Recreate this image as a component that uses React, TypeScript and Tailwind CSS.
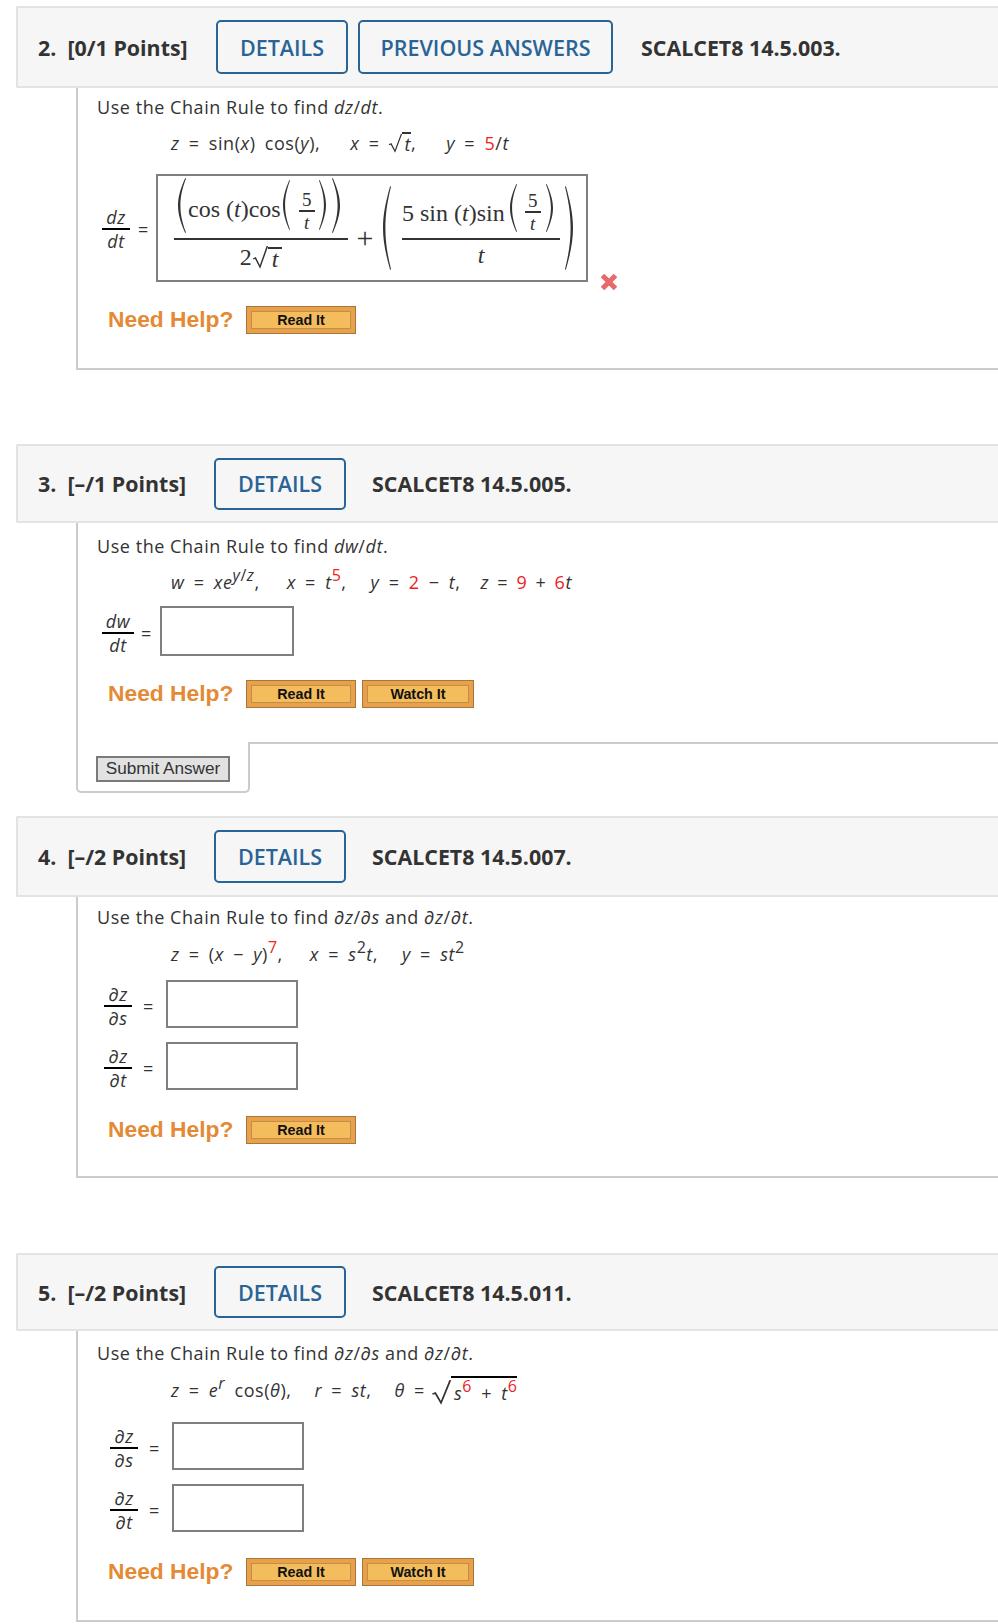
import { ReactNode } from 'react'

const Red = ({ children }: { children: ReactNode }) => <span className="text-[#f0211d] not-italic">{children}</span>
const I = ({ children }: { children: ReactNode }) => <i className="italic">{children}</i>
const Sup = ({ children }: { children: ReactNode }) => <sup className="text-[16px] leading-none align-baseline top-[-8px]">{children}</sup>

function Paren({ h, w = 8, right = false, className = '' }: { h: number, w?: number, right?: boolean, className?: string }) {
  return (
    <svg width={w} height={h} viewBox="0 0 10 100" preserveAspectRatio="none" className={`shrink-0 ${right ? '-scale-x-100' : ''} ${className}`}>
      <path d="M9 0 C3 20 0 35 0 50 C0 65 3 80 9 100 L10 99 C5 80 3 65 3 50 C3 35 5 20 10 1 Z" fill="#333" />
    </svg>
  )
}

function Radical({ w, h }: { w: number, h: number }) {
  return (
    <svg width={w} height={h} viewBox="0 0 14 24" preserveAspectRatio="none" className="shrink-0">
      <path d="M1 14 L3 13 L7 22 L13.5 1" fill="none" stroke="#333" strokeWidth="1.3" />
    </svg>
  )
}

function Frac({ top, bottom, className = '' }: { top: ReactNode, bottom: ReactNode, className?: string }) {
  return (
    <span className={`inline-flex flex-col items-center italic leading-[22px] ${className}`}>
      <span>{top}</span>
      <span className="w-full h-[2px] bg-black" />
      <span>{bottom}</span>
    </span>
  )
}

function TinyFrac({ w }: { w: number }) {
  return (
    <span className="flex flex-col items-center font-['Liberation_Serif',serif] text-[19px] leading-[21px]" style={{ width: w }}>
      <span>5</span>
      <span className="w-full h-[2px] bg-[#333]" />
      <i>t</i>
    </span>
  )
}

function Help({ watch = false }: { watch?: boolean }) {
  return (
    <div className="flex items-center h-[28px] ml-[11px] tracking-normal font-['Liberation_Sans',sans-serif]">
      <span className="w-[124px] mb-[2px] text-[22.8px] font-bold text-[#e48a34] whitespace-nowrap">Need Help?</span>
      <HelpButton label="Read It" className="ml-[14px] w-[110px]" />
      {watch && <HelpButton label="Watch It" className="ml-[6px] w-[112px]" />}
    </div>
  )
}

function HelpButton({ label, className }: { label: string, className: string }) {
  return (
    <div className={`h-[28px] border border-[#a87636] bg-[#e8a04c] p-[4px] ${className}`}>
      <div className="h-full border border-[#c48f42] bg-[#f3bd5e] flex items-center justify-center text-[14.3px] font-bold text-[#111] leading-none">{label}</div>
    </div>
  )
}

function Header({ label, code, height, btn, gap, drop = 'pt-[2px]', prev = false }: { label: string, code: string, height: string, btn: string, gap: string, drop?: string, prev?: boolean }) {
  const button = `flex items-center justify-center border-2 border-[#2a6496] rounded-[5px] font-semibold text-[21.5px] text-[#2a6496] ${drop} ${btn}`
  return (
    <div className={`flex items-center border-2 border-r-0 border-[#e3e3e3] bg-[#f6f6f6] rounded-l-[2px] ml-[16px] pl-[20px] font-bold text-[21.4px] text-[#333] tracking-normal ${height}`}>
      <span className={`whitespace-pre ${drop} ${gap}`}>{label}</span>
      <span className={`${button} w-[132px]`}>DETAILS</span>
      {prev && <span className={`${button} w-[255px] ml-[10px]`}>PREVIOUS ANSWERS</span>}
      <span className={`${drop} ${prev ? 'ml-[28px]' : 'ml-[26px]'}`}>{code}</span>
    </div>
  )
}

function Answer({ top, bottom, mt, fracMl }: { top: string, bottom: string, mt: string, fracMl: string }) {
  return (
    <div className={`flex items-center ${mt} ${fracMl}`}>
      <div className="flex items-center mt-[5px]">
        <Frac top={top} bottom={bottom} className="w-[28px]" />
        <span className="ml-[11px] w-[12px]">=</span>
      </div>
      <div className="w-[132px] h-[48px] border-2 border-[#7f7f7f] bg-white ml-[11px]" />
    </div>
  )
}

export default function App() {
  return (
    <div className="w-[998px] h-[1624px] overflow-hidden bg-white pt-[6px] font-['Open_Sans',sans-serif] text-[18px] tracking-[0.55px] text-[#333]">
      {/* question 2 */}
      <Header label="2.  [0/1 Points]" code="SCALCET8 14.5.003." height="h-[82px]" btn="h-[54px]" gap="w-[178px]" drop="pt-[3px]" prev />
      <div className="ml-[76px] h-[282px] border-l-2 border-b-2 border-[#cccccc] pl-[19px] pt-[6px]">
        <p className="leading-[26px]">Use the Chain Rule to find <I>dz</I>/<I>dt</I>.</p>
        <div className="flex items-center ml-[74px] mt-[10px] h-[26px] whitespace-pre [word-spacing:4px]">
          <span><I>z</I> = sin(<I>x</I>) cos(<I>y</I>),</span>
          <span className="ml-[30px]"><I>x</I> =</span>
          <span className="ml-[8px]"><Radical w={14} h={20} /></span>
          <span className="border-t-2 border-[#333] leading-[20px] pl-[3px]"><I>t</I></span>
          <span>,</span>
          <span className="ml-[30px]"><I>y</I> = <Red>5</Red>/<I>t</I></span>
        </div>
        <div className="flex items-end mt-[18px] ml-[5px]">
          <div className="flex items-center self-center mt-[2px]">
            <Frac top="dz" bottom="dt" className="w-[28px]" />
            <span className="ml-[8px] w-[11px]">=</span>
          </div>
          <div className="ml-[7px] w-[432px] h-[108px] border-2 border-[#7f7f7f] flex items-center pl-[16px] font-['Liberation_Serif',serif] text-[24px] leading-none tracking-normal">
            <div className="w-[174px] flex flex-col items-center h-[100px]">
              <div className="flex items-center h-[60px] w-full pl-[4px]">
                <Paren h={55} className="mb-[6px]" />
                <span className="ml-[2px] mt-[2px] whitespace-pre">cos (<i>t</i>)cos</span>
                <Paren h={50} w={7} className="ml-[2px] mb-[6px]" />
                <span className="ml-[9px] mt-[6px]"><TinyFrac w={16} /></span>
                <Paren h={50} w={7} right className="ml-[4px] mb-[6px]" />
                <Paren h={55} right className="ml-[6px] mb-[6px]" />
              </div>
              <span className="w-full h-[2px] bg-[#333]" />
              <div className="flex items-center h-[34px]">
                <span>2</span>
                <Radical w={16} h={24} />
                <i className="border-t-2 border-[#333] px-[4px] leading-[20px] mt-[2px]">t</i>
              </div>
            </div>
            <span className="ml-[8px] mt-[20px] w-[18px] text-center text-[30px]">+</span>
            <Paren h={84} className="ml-[9px]" />
            <div className="ml-[11px] w-[158px] flex flex-col items-center h-[100px]">
              <div className="flex items-center h-[60px] w-full">
                <span className="mt-[10px] whitespace-pre">5 sin (<i>t</i>)sin</span>
                <Paren h={48} w={7} className="ml-[5px]" />
                <span className="ml-[8px] mt-[8px]"><TinyFrac w={16} /></span>
                <Paren h={48} w={7} right className="ml-[5px]" />
              </div>
              <span className="w-full h-[2px] bg-[#333]" />
              <i className="h-[30px] flex items-center">t</i>
            </div>
            <Paren h={84} right className="ml-[5px]" />
          </div>
          <svg width="18" height="18" viewBox="0 0 18 18" className="ml-[12px] mb-[-9px]">
            <path d="M2.5 2.5 L15.5 15.5 M15.5 2.5 L2.5 15.5" stroke="#e8686b" strokeWidth="5" />
          </svg>
        </div>
        <div className="mt-[24px]"><Help /></div>
      </div>

      {/* question 3 */}
      <div className="mt-[74px]">
        <Header label="3.  [–/1 Points]" code="SCALCET8 14.5.005." height="h-[79px]" btn="h-[52px]" gap="w-[176px]" />
      </div>
      <div className="ml-[76px] h-[219px] border-l-2 border-[#cccccc] pl-[19px] pt-[10px]">
        <p className="leading-[26px]">Use the Chain Rule to find <I>dw</I>/<I>dt</I>.</p>
        <div className="ml-[74px] mt-[10px] h-[26px] leading-[26px] whitespace-pre [word-spacing:4px]">
          <I>w</I> = <I>xe</I><Sup><I>y</I>/<I>z</I></Sup>,<span className="ml-[27px]"><I>x</I> = <I>t</I><Sup><Red>5</Red></Sup>,</span>
          <span className="ml-[24px]"><I>y</I> = <Red>2</Red> − <I>t</I>,</span>
          <span className="ml-[20px] [word-spacing:3px]"><I>z</I> = <Red>9</Red> + <Red>6</Red><I>t</I></span>
        </div>
        <div className="flex items-center mt-[11px] ml-[5px]">
          <div className="flex items-center mt-[4px]">
            <Frac top="dw" bottom="dt" className="w-[32px]" />
            <span className="ml-[7px] w-[12px]">=</span>
          </div>
          <div className="ml-[7px] w-[134px] h-[50px] border-2 border-[#7f7f7f]" />
        </div>
        <div className="mt-[24px]"><Help watch /></div>
      </div>
      <div className="ml-[76px] flex h-[51px]">
        <div className="w-[174px] border-l-2 border-r-2 border-b-2 border-[#cccccc] rounded-b-[5px] pl-[18px] pt-[14px]">
          <div className="w-[134px] h-[26px] border-2 border-[#7a7a7a] bg-[#e2e2e2] flex items-center justify-center font-['Liberation_Sans',sans-serif] text-[17.2px] tracking-normal leading-none">Submit Answer</div>
        </div>
        <div className="flex-1 border-t-2 border-[#cccccc]" />
      </div>

      {/* question 4 */}
      <div className="mt-[23px]">
        <Header label="4.  [–/2 Points]" code="SCALCET8 14.5.007." height="h-[81px]" btn="h-[53px]" gap="w-[176px]" />
      </div>
      <div className="ml-[76px] h-[281px] border-l-2 border-b-2 border-[#cccccc] pl-[19px] pt-[7px]">
        <p className="leading-[26px]">Use the Chain Rule to find ∂<I>z</I>/∂<I>s</I> and ∂<I>z</I>/∂<I>t</I>.</p>
        <div className="ml-[74px] mt-[11px] h-[26px] leading-[26px] whitespace-pre [word-spacing:4px]">
          <I>z</I> = (<I>x</I> − <I>y</I>)<Sup><Red>7</Red></Sup>,<span className="ml-[27px]"><I>x</I> = <I>s</I><Sup>2</Sup><I>t</I>,</span>
          <span className="ml-[24px]"><I>y</I> = <I>st</I><Sup>2</Sup></span>
        </div>
        <Answer top="∂z" bottom="∂s" mt="mt-[11px]" fracMl="ml-[7px]" />
        <Answer top="∂z" bottom="∂t" mt="mt-[11px]" fracMl="ml-[7px]" />
        <div className="mt-[25px]"><Help /></div>
      </div>

      {/* question 5 */}
      <div className="mt-[75px]">
        <Header label="5.  [–/2 Points]" code="SCALCET8 14.5.011." height="h-[78px]" btn="h-[52px]" gap="w-[176px]" />
      </div>
      <div className="ml-[76px] h-[291px] border-l-2 border-b-2 border-[#cccccc] pl-[19px] pt-[9px]">
        <p className="leading-[26px]">Use the Chain Rule to find ∂<I>z</I>/∂<I>s</I> and ∂<I>z</I>/∂<I>t</I>.</p>
        <div className="flex items-center ml-[74px] mt-[11px] h-[26px] whitespace-pre [word-spacing:4px]">
          <span><I>z</I> = <I>e</I><Sup><I>r</I></Sup> cos(<I>θ</I>),</span>
          <span className="ml-[23px]"><I>r</I> = <I>st</I>,</span>
          <span className="ml-[23px]"><I>θ</I> =</span>
          <span className="ml-[6px] mt-[4px]"><Radical w={20} h={26} /></span>
          <span className="border-t-2 border-black leading-[30px] mt-[4px] pl-[3px]"><I>s</I><Sup><Red>6</Red></Sup> + <I>t</I><Sup><Red>6</Red></Sup></span>
        </div>
        <Answer top="∂z" bottom="∂s" mt="mt-[17px]" fracMl="ml-[13px]" />
        <Answer top="∂z" bottom="∂t" mt="mt-[11px]" fracMl="ml-[13px]" />
        <div className="mt-[25px]"><Help watch /></div>
      </div>
    </div>
  )
}
